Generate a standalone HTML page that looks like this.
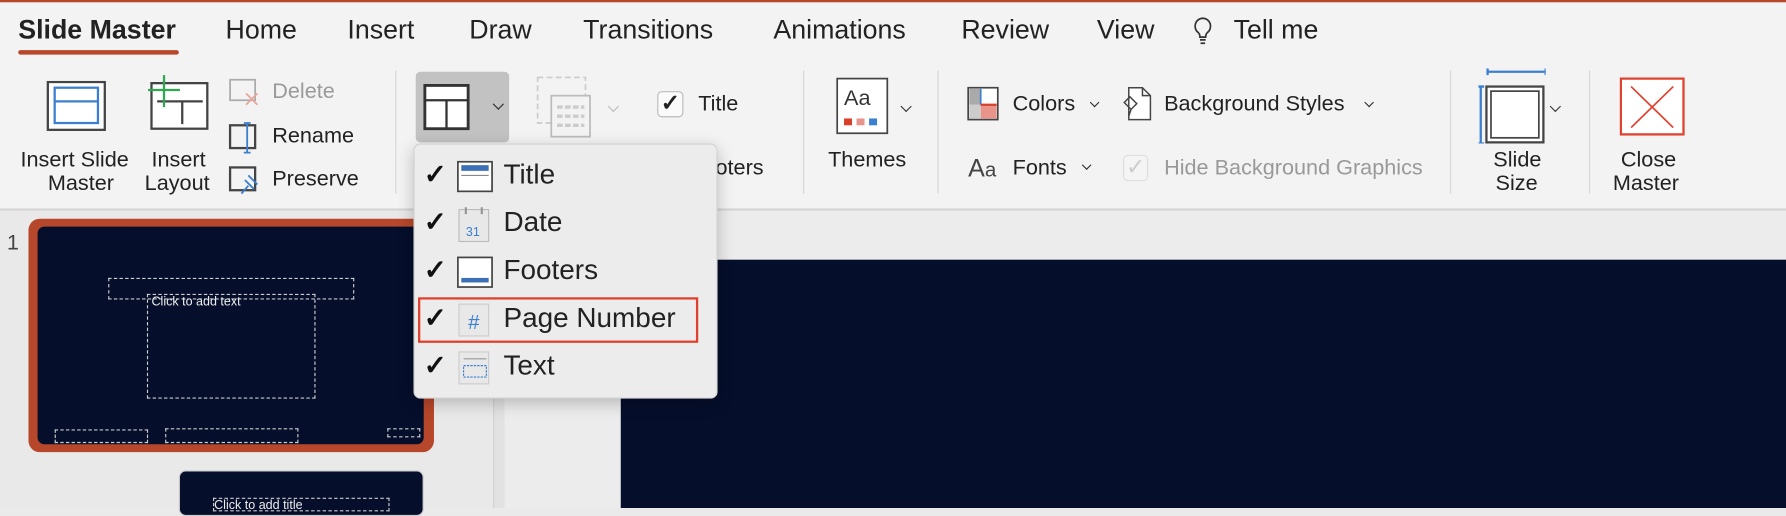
<!DOCTYPE html>
<html><head><meta charset="utf-8"><style>
*{margin:0;padding:0;box-sizing:border-box}
html,body{width:1786px;height:508px;overflow:hidden;background:#eaeaea}
#s{position:absolute;left:0;top:0;width:1568px;height:446px;transform:scale(1.13903,1.13901);transform-origin:0 0;font-family:"Liberation Sans",sans-serif;color:#222}
.a{position:absolute;white-space:nowrap}
.tab{font-size:23.5px;top:13px}
.lb{font-size:19px}
.sep{position:absolute;width:1px;background:#d6d6d6;top:62px;height:108px}
.chev{position:absolute;width:7px;height:7px;border-right:1.6px solid #333;border-bottom:1.6px solid #333;transform:rotate(45deg)}
.mi{position:absolute;left:0;width:267px;height:40px}
.mi .ck{position:absolute;left:8px;top:4px;font-size:24px;font-weight:bold;color:#111}
.mi .t{position:absolute;left:78px;top:5px;font-size:24.5px;color:#222}
</style></head><body><div id="s">
<div class="a" style="left:0;top:0;width:1568px;height:183px;background:#f3f3f3"></div>
<div class="a" style="left:0;top:0;width:1568px;height:2px;background:#b7472a"></div>
<div class="a" style="left:0;top:183px;width:1568px;height:2px;background:#d4d4d4"></div>
<div class="a tab" style="left:16px;font-weight:bold">Slide Master</div>
<div class="a" style="left:16px;top:44px;width:141px;height:4px;border-radius:2px;background:#b7472a"></div>
<div class="a tab" style="left:198px">Home</div>
<div class="a tab" style="left:305px">Insert</div>
<div class="a tab" style="left:412px">Draw</div>
<div class="a tab" style="left:512px">Transitions</div>
<div class="a tab" style="left:679px">Animations</div>
<div class="a tab" style="left:844px">Review</div>
<div class="a tab" style="left:963px">View</div>
<svg class="a" style="left:1046px;top:14px" width="20" height="30" viewBox="0 0 20 30"><path d="M10 2a7 7 0 0 0-4 12.6c1 1 1.5 2 1.5 4h5c0-2 .5-3 1.5-4A7 7 0 0 0 10 2z M7.5 21h5 M8 24h4" fill="none" stroke="#333" stroke-width="1.5"/></svg>
<div class="a tab" style="left:1083px">Tell me</div>

<svg class="a" style="left:40px;top:71px" width="54" height="44"><rect x="2" y="1" width="50" height="42" fill="#fff" stroke="#444" stroke-width="2"/><rect x="8" y="6" width="38" height="31" fill="#fff" stroke="#3b7fd1" stroke-width="2"/><line x1="8" y1="18" x2="46" y2="18" stroke="#3b7fd1" stroke-width="2"/></svg>
<div class="a lb" style="left:18px;top:130px">Insert Slide</div>
<div class="a lb" style="left:42px;top:151px">Master</div>
<svg class="a" style="left:128px;top:65px" width="56" height="50"><rect x="5" y="8" width="49" height="40" fill="#fff" stroke="#444" stroke-width="2"/><line x1="10" y1="24" x2="50" y2="24" stroke="#444" stroke-width="2"/><line x1="32" y1="24" x2="32" y2="44" stroke="#444" stroke-width="2"/><path d="M16 1v28M2 14h28" stroke="#2fa84f" stroke-width="2"/></svg>
<div class="a lb" style="left:133px;top:130px">Insert</div>
<div class="a lb" style="left:127px;top:151px">Layout</div>
<svg class="a" style="left:200px;top:68px" width="30" height="28"><rect x="2" y="2" width="22" height="18" fill="none" stroke="#aaa" stroke-width="1.5"/><path d="M16 14l10 10M26 14l-10 10" stroke="#e8a59b" stroke-width="1.5"/></svg>
<div class="a lb" style="left:239px;top:70px;color:#9a9a9a">Delete</div>
<svg class="a" style="left:200px;top:106px" width="30" height="30"><rect x="2" y="4" width="22" height="20" fill="none" stroke="#444" stroke-width="2"/><path d="M14 2h6M17 2v26M14 28h6" stroke="#3b7fd1" stroke-width="1.6" fill="none"/></svg>
<div class="a lb" style="left:239px;top:109px">Rename</div>
<svg class="a" style="left:200px;top:144px" width="30" height="30"><rect x="2" y="3" width="22" height="20" fill="none" stroke="#444" stroke-width="2"/><path d="M12 26l6-7M15 14l8 8M18 10l8 8" stroke="#3b7fd1" stroke-width="1.6" fill="none"/></svg>
<div class="a lb" style="left:239px;top:147px">Preserve</div>
<div class="sep" style="left:347px"></div>

<div class="a" style="left:365px;top:63px;width:82px;height:62px;background:#c2c2c2;border-radius:4px"></div>
<svg class="a" style="left:371px;top:73px" width="42" height="42"><rect x="2" y="2" width="38" height="38" fill="#fff" stroke="#333" stroke-width="2.5"/><line x1="2" y1="15" x2="40" y2="15" stroke="#333" stroke-width="2"/><line x1="21" y1="15" x2="21" y2="40" stroke="#333" stroke-width="2"/></svg>
<div class="chev" style="left:434px;top:88px"></div>
<svg class="a" style="left:471px;top:67px" width="60" height="58"><rect x="1" y="1" width="42" height="40" fill="none" stroke="#ccc" stroke-width="1.5" stroke-dasharray="5 3"/><rect x="13" y="17" width="34" height="36" fill="#f3f3f3" stroke="#bbb" stroke-width="1.5"/><path d="M18 27h24M18 35h24M18 43h24" stroke="#ccc" stroke-width="3" stroke-dasharray="5 2"/></svg>
<div class="chev" style="left:535px;top:90px;border-color:#bbb"></div>
<div class="a" style="left:577px;top:80px;width:23px;height:23px;border:1px solid #bbb;border-radius:4px;background:#fafafa;font-size:20px;font-weight:bold;text-align:center;line-height:20px">✓</div>
<div class="a lb" style="left:613px;top:81px">Title</div>
<div class="a lb" style="left:606px;top:137px">Footers</div>
<div class="sep" style="left:705px"></div>
<svg class="a" style="left:734px;top:68px" width="48" height="52"><rect x="1" y="1" width="44" height="48" fill="#fff" stroke="#444" stroke-width="1.5"/><text x="7" y="24" font-family="Liberation Sans" font-size="19" fill="#333">Aa</text><rect x="7" y="36" width="7" height="6" fill="#d9402b"/><rect x="18" y="36" width="7" height="6" fill="#e8948a"/><rect x="29" y="36" width="7" height="6" fill="#3b7fd1"/></svg>
<div class="chev" style="left:792px;top:90px"></div>
<div class="a lb" style="left:727px;top:130px">Themes</div>
<div class="sep" style="left:823px"></div>
<svg class="a" style="left:849px;top:76px" width="28" height="30"><rect x="1" y="1" width="26" height="28" fill="#fff" stroke="#444" stroke-width="1.5"/><rect x="2" y="2" width="10" height="14" fill="#aaa"/><rect x="12" y="16" width="14" height="12" fill="#e8948a"/><rect x="2" y="16" width="10" height="12" fill="#ccc"/><line x1="12" y1="2" x2="12" y2="16" stroke="#3b7fd1" stroke-width="1.5"/><line x1="12" y1="16" x2="26" y2="16" stroke="#d9402b" stroke-width="2"/></svg>
<div class="a lb" style="left:889px;top:81px">Colors</div>
<div class="chev" style="left:958px;top:87px;width:6px;height:6px"></div>
<svg class="a" style="left:984px;top:76px" width="28" height="30"><path d="M7 1h12l7 7v21H7z M19 1v7h7" fill="#fff" stroke="#444" stroke-width="1.3"/><path d="M3 14l6 6 5-5-6-6z M9 20l-2 6" fill="none" stroke="#444" stroke-width="1.3"/></svg>
<div class="a lb" style="left:1022px;top:81px">Background Styles</div>
<div class="chev" style="left:1199px;top:87px;width:6px;height:6px"></div>
<div class="a" style="left:850px;top:135px;font-size:22px;color:#444">A<span style="font-size:18px">a</span></div>
<div class="a lb" style="left:889px;top:137px">Fonts</div>
<div class="chev" style="left:951px;top:142px;width:6px;height:6px"></div>
<div class="a" style="left:986px;top:136px;width:22px;height:23px;border:1px solid #ddd;border-radius:4px;background:#f4f4f4;font-size:20px;color:#ccc;text-align:center;line-height:20px">✓</div>
<div class="a lb" style="left:1022px;top:137px;color:#999">Hide Background Graphics</div>
<div class="sep" style="left:1273px"></div>
<svg class="a" style="left:1297px;top:60px" width="60" height="66"><path d="M9 3h51" stroke="#3b7fd1" stroke-width="2"/><path d="M9 0v6M60 0v6M1 16h5M1 66h5M3 16v50" stroke="#3b7fd1" stroke-width="2"/><rect x="8" y="16" width="50" height="49" fill="#fff" stroke="#444" stroke-width="2"/><rect x="12" y="20" width="42" height="41" fill="#fff" stroke="#444" stroke-width="1.5"/></svg>
<div class="chev" style="left:1362px;top:90px"></div>
<div class="a lb" style="left:1311px;top:130px">Slide</div>
<div class="a lb" style="left:1313px;top:151px">Size</div>
<div class="sep" style="left:1395px"></div>
<svg class="a" style="left:1422px;top:68px" width="58" height="52"><rect x="1" y="1" width="55" height="49" fill="#fff" stroke="#e0412c" stroke-width="2"/><path d="M10 8l37 36M47 8L10 44" stroke="#e0412c" stroke-width="1.5"/></svg>
<div class="a lb" style="left:1423px;top:130px">Close</div>
<div class="a lb" style="left:1416px;top:151px">Master</div>

<div class="a" style="left:0;top:185px;width:433px;height:261px;background:#e9e9e9"></div>
<div class="a" style="left:433px;top:185px;width:10px;height:261px;background:#e2e2e2;border-left:1px solid #d0d0d0"></div>
<div class="a" style="left:443px;top:185px;width:1125px;height:261px;background:#ececec"></div>
<div class="a" style="left:545px;top:228px;width:1023px;height:218px;background:#050e2b"></div>
<div class="a" style="left:6px;top:203px;font-size:19px;color:#444">1</div>
<div class="a" style="left:25px;top:192px;width:356px;height:205px;border-radius:10px;background:#b7472a"></div>
<div class="a" style="left:33px;top:199px;width:339px;height:191px;border-radius:6px;background:#050e2b"></div>
<div class="a" style="left:95px;top:244px;width:216px;height:19px;border:1px dashed #ccc"></div>
<div class="a" style="left:129px;top:258px;width:148px;height:92px;border:1px dashed #ccc;color:#eee;font-size:11px;padding-left:3px">Click to add text</div>
<div class="a" style="left:48px;top:377px;width:82px;height:12px;border:1px dashed #ccc"></div>
<div class="a" style="left:145px;top:376px;width:117px;height:13px;border:1px dashed #ccc"></div>
<div class="a" style="left:340px;top:376px;width:29px;height:8px;border:1px dashed #ccc"></div>
<div class="a" style="left:157px;top:413px;width:215px;height:40px;border-radius:6px;background:#050e2b;border:1px solid #ccc"></div>
<div class="a" style="left:187px;top:437px;width:155px;height:12px;border:1px dashed #ccc;color:#eee;font-size:11px">Click to add title</div>

<div class="a" style="left:363px;top:126px;width:267px;height:224px;background:#ececec;border:1px solid #d2d2d2;border-radius:6px;box-shadow:0 4px 14px rgba(0,0,0,.22)">
 <div class="mi" style="top:8px"><span class="ck">✓</span><svg class="a" style="left:37px;top:6px" width="32" height="28"><rect x="1" y="1" width="30" height="26" fill="#fff" stroke="#444" stroke-width="1.5"/><rect x="4" y="4" width="24" height="5" fill="#3b6fb6"/><line x1="4" y1="13" x2="28" y2="13" stroke="#888"/></svg><span class="t">Title</span></div>
 <div class="mi" style="top:50px"><span class="ck">✓</span><svg class="a" style="left:37px;top:4px" width="32" height="32"><rect x="2" y="3" width="26" height="28" fill="#e8e8e8" stroke="#bbb"/><path d="M8 1v6M22 1v6" stroke="#999" stroke-width="2"/><text x="8" y="26" font-size="11" font-family="Liberation Sans" fill="#3b7fd1">31</text></svg><span class="t">Date</span></div>
 <div class="mi" style="top:92px"><span class="ck">✓</span><svg class="a" style="left:37px;top:6px" width="32" height="28"><rect x="1" y="1" width="30" height="26" fill="#fff" stroke="#444" stroke-width="1.5"/><rect x="4" y="19" width="24" height="4" fill="#3b6fb6"/></svg><span class="t">Footers</span></div>
 <div class="mi" style="top:134px"><span class="ck">✓</span><svg class="a" style="left:37px;top:4px" width="32" height="32"><rect x="2" y="2" width="26" height="28" fill="#e8e8e8" stroke="#ccc"/><text x="10" y="24" font-size="18" font-family="Liberation Sans" fill="#3b7fd1">#</text></svg><span class="t">Page Number</span></div>
 <div class="mi" style="top:176px"><span class="ck">✓</span><svg class="a" style="left:37px;top:4px" width="32" height="32"><rect x="2" y="2" width="26" height="28" fill="#e8e8e8" stroke="#ccc"/><rect x="6" y="14" width="20" height="10" fill="none" stroke="#3b7fd1" stroke-dasharray="2 1"/><line x1="6" y1="8" x2="26" y2="8" stroke="#999"/></svg><span class="t">Text</span></div>
</div>
<div class="a" style="left:367px;top:261px;width:246px;height:40px;border:2px solid #e0412c"></div>
</div></body></html>
